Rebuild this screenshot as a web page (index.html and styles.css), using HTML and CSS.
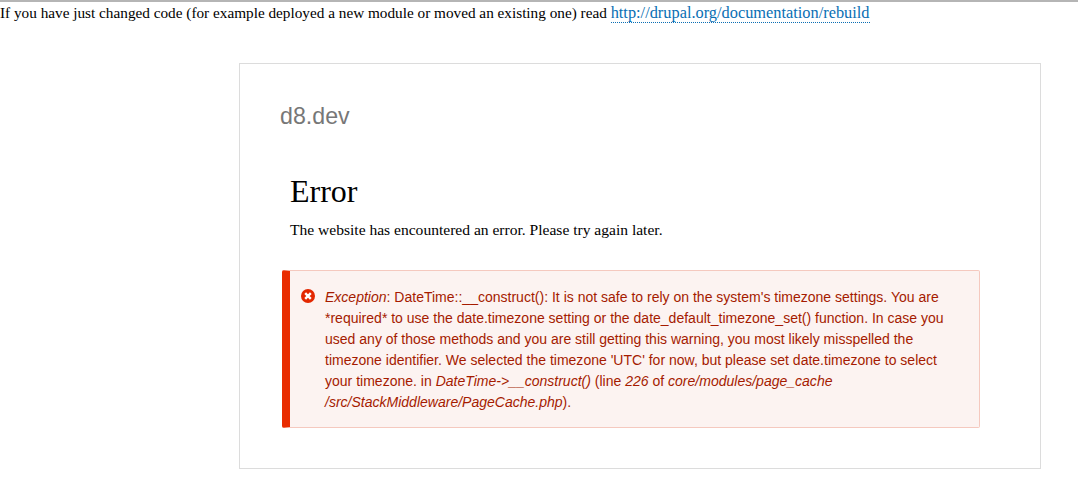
FILE: index.html
```html
<!DOCTYPE html>
<html lang="en">
<head>
<meta charset="utf-8">
<title>Error | d8.dev</title>
<link rel="stylesheet" href="styles.css">
</head>
<body>
<p class="notice">If you have just changed code (for example deployed a new module or moved an existing one) read <a href="#">http://drupal.org/documentation/rebuild</a></p>
<main class="card">
  <div class="site-name">d8.dev</div>
  <section class="content">
    <h1>Error</h1>
    <p class="lead">The website has encountered an error. Please try again later.</p>
    <div class="message">
      <svg class="icon" viewBox="0 0 14 14" width="14" height="14" aria-hidden="true"><circle cx="7" cy="7" r="7" fill="#e32700"/><path d="M4.2 4.2l5.6 5.6M9.8 4.2l-5.6 5.6" stroke="#fff" stroke-width="2.4" fill="none"/></svg>
      <p><em>Exception</em>: DateTime::__construct(): It is not safe to rely on the system's timezone settings. You are *required* to use the date.timezone setting or the date_default_timezone_set() function. In case you used any of those methods and you are still getting this warning, you most likely misspelled the timezone identifier. We selected the timezone 'UTC' for now, but please set date.timezone to select your timezone. in <em>DateTime-&gt;__construct()</em> (line <em>226</em> of <em>core/modules/page_cache<br>/src/StackMiddleware/PageCache.php</em>).</p>
    </div>
  </section>
</main>
</body>
</html>
```
FILE: styles.css
```css
html, body { margin: 0; padding: 0; background: #fff; }
body {
  border-top: 2px solid #b5b5b5;
  height: 492px;
  overflow: hidden;
  font-family: "Liberation Serif", serif;
  color: #000;
}
.notice {
  margin: 0;
  padding-top: 2px;
  font-size: 15.25px;
  line-height: 18px;
}
.notice a {
  font-size: 16.35px;
  color: #0a6fb4;
  text-decoration: none;
  border-bottom: 1px dotted #0a6fb4;
}
.card {
  box-sizing: border-box;
  width: 802px;
  height: 406px;
  margin: 41px 0 0 239px;
  padding: 38px 60px 0 42px;
  border: 1px solid #dcdcdc;
}
.site-name {
  margin-left: -2px;
  font-family: "Liberation Sans", sans-serif;
  font-size: 23.2px;
  line-height: 28px;
  color: #777;
}
.content { margin-top: 43px; }
h1 {
  margin: 0 0 0 8px;
  font-size: 32px;
  line-height: 36px;
  font-weight: 400;
}
.lead {
  margin: 11px 0 0 8px;
  font-size: 15.55px;
  line-height: 20px;
}
.message {
  box-sizing: border-box;
  display: flex;
  gap: 10px;
  width: 698px;
  height: 158px;
  margin-top: 30px;
  padding: 16px 30px 0 11px;
  background: #fcf3f1;
  border: 1px solid #f5c9bf;
  border-left: 8px solid #e92c00;
  border-radius: 2px;
  color: #a51b00;
  font-family: "Liberation Sans", sans-serif;
  font-size: 14.03px;
  line-height: 21px;
}
.icon { flex: none; margin-top: 2px; }
.message p { margin: 0; }
```
